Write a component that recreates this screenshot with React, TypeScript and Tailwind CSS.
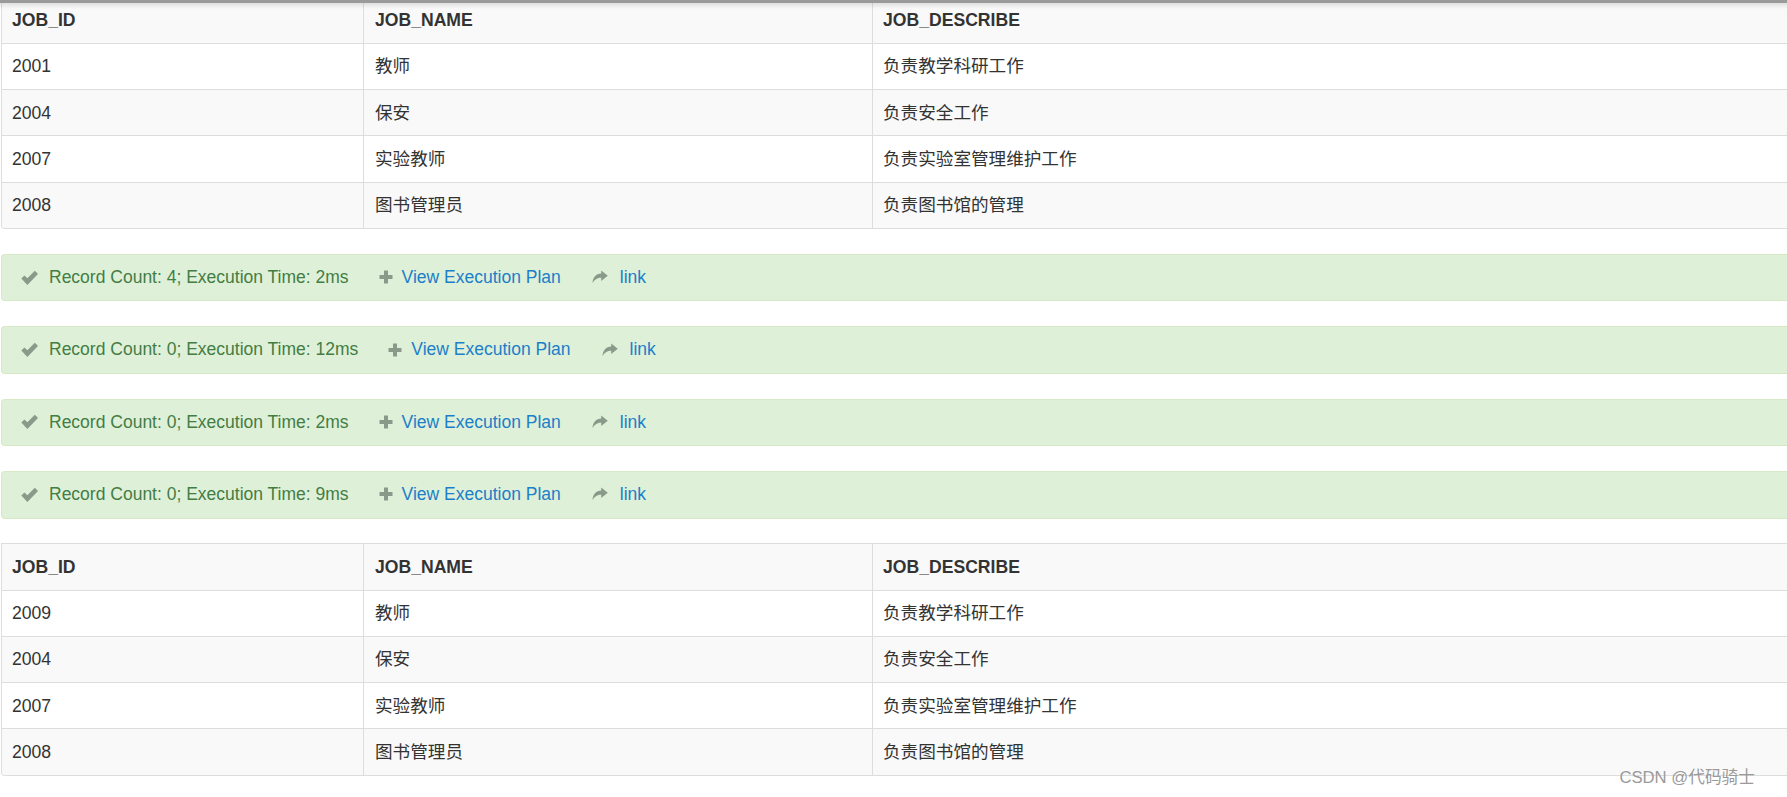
import React from "react"

const cjk = "font-['Liberation_Sans','Noto_Sans_CJK_SC',sans-serif]"

const table1 = [
  ["2001", "教师", "负责教学科研工作"],
  ["2004", "保安", "负责安全工作"],
  ["2007", "实验教师", "负责实验室管理维护工作"],
  ["2008", "图书管理员", "负责图书馆的管理"],
]

const table2 = [
  ["2009", "教师", "负责教学科研工作"],
  ["2004", "保安", "负责安全工作"],
  ["2007", "实验教师", "负责实验室管理维护工作"],
  ["2008", "图书管理员", "负责图书馆的管理"],
]

const alerts = [
  "Record Count: 4; Execution Time: 2ms",
  "Record Count: 0; Execution Time: 12ms",
  "Record Count: 0; Execution Time: 2ms",
  "Record Count: 0; Execution Time: 9ms",
]

function CheckIcon() {
  return (
    <svg viewBox="0 0 16 16" className="w-[17px] h-[17px] shrink-0 fill-[#8a9a8a]">
      <path d="M0.3 9 L3.2 6.2 L6 8.8 L13 1.6 L16 4.6 L6 15 Z" />
    </svg>
  )
}

function PlusIcon() {
  return (
    <svg viewBox="0 0 14 14" className="w-[14px] h-[14px] shrink-0 fill-[#8a9a8a]">
      <path d="M5 0.5 H9 V5 H13.5 V9 H9 V13.5 H5 V9 H0.5 V5 H5 Z" />
    </svg>
  )
}

function ShareIcon() {
  return (
    <svg viewBox="0 0 16 14" className="w-4 h-[14px] shrink-0 fill-[#8a9a8a]">
      <path d="M9.2 0.5 L15.8 5.8 L9.2 11 V7.8 C5.5 7.8 3 9.2 0.5 13 C0.8 7.2 4.2 3.6 9.2 3.4 Z" />
    </svg>
  )
}

function ResultTable({ rows, className }: { rows: string[][]; className?: string }) {
  const cell = "px-[10px] flex items-center border-r border-[#ddd]"
  const nameCell = "pl-[11px] pr-[10px] flex items-center border-r border-[#ddd]"
  return (
    <div className={`border-y border-l border-[#ddd] rounded-bl-[4px] overflow-hidden text-[#333] ${className ?? ""}`}>
      <div className="grid grid-cols-[362px_509px_1fr] h-[45.4px] bg-[#f9f9f9] font-bold">
        <div className={cell}>JOB_ID</div>
        <div className={nameCell}>JOB_NAME</div>
        <div className="px-[10px] flex items-center">JOB_DESCRIBE</div>
      </div>
      {rows.map((r, i) => (
        <div
          key={i}
          className={`grid grid-cols-[362px_509px_1fr] h-[46.3px] border-t border-[#ddd] ${i % 2 ? "bg-[#f9f9f9]" : "bg-white"}`}
        >
          <div className={cell}>{r[0]}</div>
          <div className={nameCell}>{r[1]}</div>
          <div className="px-[10px] flex items-center">{r[2]}</div>
        </div>
      ))}
    </div>
  )
}

function Alert({ text }: { text: string }) {
  return (
    <div className="h-[47.4px] flex items-center pl-[19px] pb-[1px] border-y border-l border-[#d6e9c6] bg-[#dff0d8] rounded-l-[4px] text-[#437d44]">
      <CheckIcon />
      <span className="ml-[11px] text-[17.5px]">{text}</span>
      <span className="ml-[30px]"><PlusIcon /></span>
      <a className="ml-[9px] text-[17.5px] text-[#1b7fc9]">View Execution Plan</a>
      <span className="ml-[31px]"><ShareIcon /></span>
      <a className="ml-[12px] text-[17.5px] text-[#1b7fc9]">link</a>
    </div>
  )
}

export default function App() {
  return (
    <div className={`relative w-[1787px] h-[797px] overflow-hidden bg-white pl-[1px] text-[17.6px] ${cjk}`}>
      <div className="absolute inset-x-0 top-0 h-[3px] bg-[#9a9a9a]" />
      <div className="absolute inset-x-0 top-[3px] h-[6px] bg-gradient-to-b from-black/10 to-transparent" />
      <ResultTable rows={table1} className="-mt-[3.6px]" />
      <div className="mt-[25px] flex flex-col gap-[25px]">
        {alerts.map((a, i) => (
          <Alert key={i} text={a} />
        ))}
      </div>
      <ResultTable rows={table2} className="mt-[24.6px]" />
      <div className="absolute right-[32px] bottom-[7px] text-[#9a9a9a] text-[16.7px]">CSDN @代码骑士</div>
    </div>
  )
}
